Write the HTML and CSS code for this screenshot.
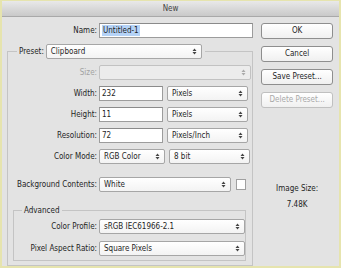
FILE: index.html
```html
<!DOCTYPE html>
<html>
<head>
  <meta charset="UTF-8">
  <title>New</title>
  <link rel="stylesheet" href="styles.css">
</head>
<body>
  <div class="win">
    <div class="titlebar">New</div>
    <div class="content">
      <div class="main">
        <div class="row name-row">
          <span class="label outer">Name:</span>
          <div class="field name-field"><span class="sel">Untitled-1</span></div>
        </div>

        <fieldset class="group preset">
          <legend>
            <span class="legend-label">Preset:</span>
            <div class="select preset-select">Clipboard<svg class="arrows" width="5" height="7" viewBox="0 0 5 7"><path d="M0.5 3L2.5 0.5L4.5 3ZM0.5 4L2.5 6.5L4.5 4Z" fill="#444"/></svg></div>
          </legend>

          <div class="row first">
            <span class="label disabled">Size:</span>
            <div class="select wide disabled"><svg class="arrows" width="5" height="7" viewBox="0 0 5 7"><path d="M0.5 3L2.5 0.5L4.5 3ZM0.5 4L2.5 6.5L4.5 4Z" fill="#aaa"/></svg></div>
          </div>
          <div class="row">
            <span class="label">Width:</span>
            <div class="field num">232</div>
            <div class="select unit">Pixels<svg class="arrows" width="5" height="7" viewBox="0 0 5 7"><path d="M0.5 3L2.5 0.5L4.5 3ZM0.5 4L2.5 6.5L4.5 4Z" fill="#444"/></svg></div>
          </div>
          <div class="row">
            <span class="label">Height:</span>
            <div class="field num">11</div>
            <div class="select unit">Pixels<svg class="arrows" width="5" height="7" viewBox="0 0 5 7"><path d="M0.5 3L2.5 0.5L4.5 3ZM0.5 4L2.5 6.5L4.5 4Z" fill="#444"/></svg></div>
          </div>
          <div class="row">
            <span class="label">Resolution:</span>
            <div class="field num">72</div>
            <div class="select unit">Pixels/Inch<svg class="arrows" width="5" height="7" viewBox="0 0 5 7"><path d="M0.5 3L2.5 0.5L4.5 3ZM0.5 4L2.5 6.5L4.5 4Z" fill="#444"/></svg></div>
          </div>
          <div class="row">
            <span class="label">Color Mode:</span>
            <div class="select num">RGB Color<svg class="arrows" width="5" height="7" viewBox="0 0 5 7"><path d="M0.5 3L2.5 0.5L4.5 3ZM0.5 4L2.5 6.5L4.5 4Z" fill="#444"/></svg></div>
            <div class="select unit">8 bit<svg class="arrows" width="5" height="7" viewBox="0 0 5 7"><path d="M0.5 3L2.5 0.5L4.5 3ZM0.5 4L2.5 6.5L4.5 4Z" fill="#444"/></svg></div>
          </div>
          <div class="row bg-row">
            <span class="label">Background Contents:</span>
            <div class="select bg-select">White<svg class="arrows" width="5" height="7" viewBox="0 0 5 7"><path d="M0.5 3L2.5 0.5L4.5 3ZM0.5 4L2.5 6.5L4.5 4Z" fill="#444"/></svg></div>
            <div class="swatch"></div>
          </div>

          <fieldset class="group advanced">
            <legend>Advanced</legend>
            <div class="row first">
              <span class="label inner">Color Profile:</span>
              <div class="select profile">sRGB IEC61966-2.1<svg class="arrows" width="5" height="7" viewBox="0 0 5 7"><path d="M0.5 3L2.5 0.5L4.5 3ZM0.5 4L2.5 6.5L4.5 4Z" fill="#444"/></svg></div>
            </div>
            <div class="row">
              <span class="label inner">Pixel Aspect Ratio:</span>
              <div class="select profile">Square Pixels<svg class="arrows" width="5" height="7" viewBox="0 0 5 7"><path d="M0.5 3L2.5 0.5L4.5 3ZM0.5 4L2.5 6.5L4.5 4Z" fill="#444"/></svg></div>
            </div>
          </fieldset>
        </fieldset>
      </div>

      <div class="side">
        <div class="btn">OK</div>
        <div class="btn">Cancel</div>
        <div class="btn">Save Preset...</div>
        <div class="btn off">Delete Preset...</div>
        <div class="image-size">
          <div>Image Size:</div>
          <div class="size-value">7.48K</div>
        </div>
      </div>
    </div>
  </div>
</body>
</html>
```

FILE: styles.css
```css
body {
  margin: 0;
  background-color: #e6e4ae;
  font-family: 'DejaVu Sans', 'Liberation Sans', sans-serif;
  font-stretch: condensed;
  font-size: 8px;
  color: #1e1e1e;
}

.win {
  margin: 1px 2px 0 2px;
  height: 265px;
  background-color: #e3e3e3;
}

.titlebar {
  height: 15px;
  line-height: 15px;
  text-align: center;
  color: #444;
  background: linear-gradient(#e9e9e9, #c9c9c9);
  border-bottom: 1px solid #a9a9a9;
}

.content {
  display: flex;
  padding: 6px 6px 0 5px;
}

.main {
  width: 247px;
}

.side {
  width: 72px;
  margin-left: 8px;
  display: flex;
  flex-direction: column;
  gap: 7px;
}

.row {
  display: flex;
  align-items: center;
  height: 15px;
  margin-top: 6px;
}

.row.first {
  margin-top: 6px;
}

.name-row {
  margin-top: 0;
}

.label {
  width: 89px;
  padding-right: 2px;
  text-align: right;
  flex-shrink: 0;
}

.label.outer {
  width: 90px;
}

.label.inner {
  width: 83px;
}

.label.disabled {
  color: #a2a2a2;
}

.field {
  height: 13px;
  line-height: 13px;
  background: #fff;
  border: 1px solid #9c9c9c;
  border-top-color: #8a8a8a;
  padding-left: 2px;
  box-sizing: content-box;
}

.name-field {
  width: 150px;
}

.sel {
  display: inline-block;
  height: 11px;
  line-height: 11px;
  vertical-align: top;
  margin-top: 1px;
  background-color: #b5d3f7;
  padding: 0 1px;
}

.select {
  position: relative;
  height: 13px;
  line-height: 13px;
  background: linear-gradient(#ffffff, #f3f3f3);
  border: 1px solid #a6a6a6;
  border-radius: 2px;
  padding-left: 4px;
  box-sizing: content-box;
}

.select .arrows {
  position: absolute;
  right: 4px;
  top: 3px;
}

.select.disabled {
  background: #ececec;
  border-color: #c2c2c2;
}

.num {
  width: 60px;
}

.unit {
  width: 75px;
  margin-left: 4px;
}

.wide {
  width: 146px;
}

.bg-row {
  margin-top: 13px;
}

.bg-select {
  width: 126px;
}

.swatch {
  width: 8px;
  height: 9px;
  margin-left: 5px;
  background: #fff;
  border: 1px solid #a0a0a0;
}

.profile {
  width: 140px;
}

.group {
  margin: 0;
  padding: 0;
  border: 1px solid #c4c4c4;
  min-width: 0;
}

.preset {
  margin-top: 6px;
  padding-bottom: 4px;
}

.preset legend {
  display: flex;
  align-items: center;
  margin-left: 9px;
  padding: 0 3px 0 2px;
}

.legend-label {
  margin-right: 2px;
}

.preset-select {
  width: 150px;
}

.advanced {
  margin: 13px 6px 0 5px;
  padding-bottom: 4px;
}

.advanced legend {
  margin-left: 8px;
  padding: 0 2px;
  line-height: 11px;
}

.advanced .row {
  margin-top: 7px;
}

.advanced .row.first {
  margin-top: 3px;
}

.btn {
  height: 14px;
  line-height: 14px;
  text-align: center;
  background: linear-gradient(#ffffff, #f0f0f0);
  border: 1px solid #8e8e8e;
  border-radius: 3px;
}

.btn.off {
  color: #a8a8a8;
  border-color: #c0c0c0;
}

.image-size {
  margin-top: 66px;
  text-align: center;
  line-height: 16px;
}
```
